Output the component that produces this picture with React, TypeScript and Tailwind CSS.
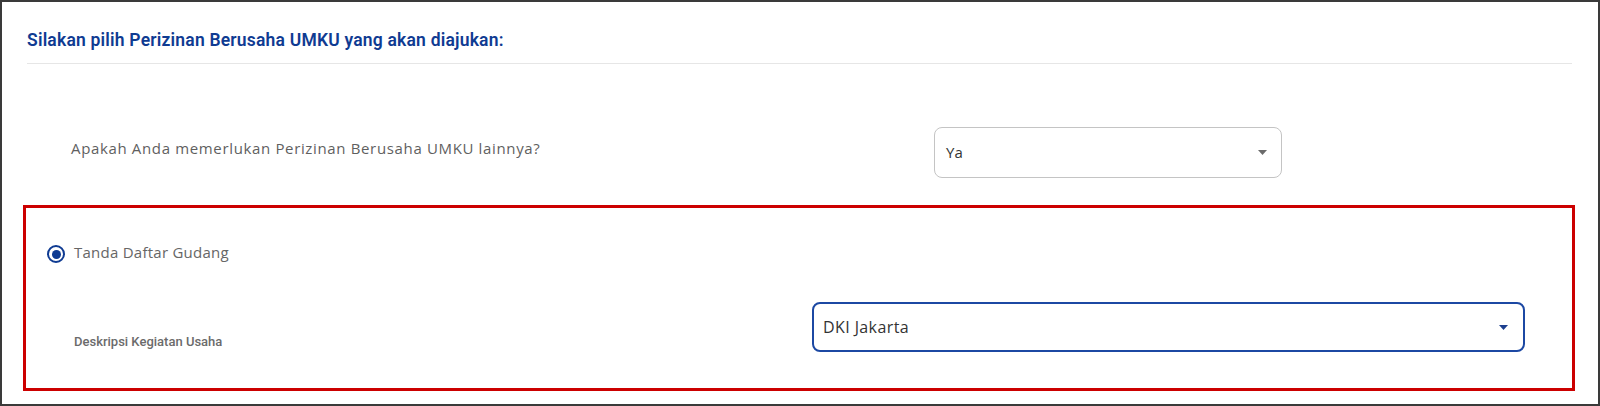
import React from "react";

const body = { fontFamily: '"Open Sans", "DejaVu Sans", sans-serif' };
const roboto = { fontFamily: 'Roboto, "Liberation Sans", sans-serif' };

function Caret({ color }: { color: string }) {
  return (
    <svg width="9" height="5" viewBox="0 0 9 5" className="shrink-0">
      <path d="M0 0 L9 0 L4.5 5 Z" fill={color} />
    </svg>
  );
}

export default function App() {
  return (
    <div className="h-[406px] w-[1600px] border-2 border-[#3a3a3a] bg-white overflow-hidden">
      <div className="pl-[25px] pr-[26px] pt-[28px]">
        <h2
          className="text-[17.5px] leading-[20px] font-semibold text-[#0f3b92] tracking-[0.2px]"
          style={roboto}
        >
          Silakan pilih Perizinan Berusaha UMKU yang akan diajukan:
        </h2>
        <div className="mt-[13px] h-px bg-[#e6e6e6]" />
      </div>

      <div className="mt-[63px] flex items-center">
        <span
          className="pl-[69px] pb-[8px] w-[932px] text-[15px] text-[#5f5f5f] tracking-[0.65px]"
          style={body}
        >
          Apakah Anda memerlukan Perizinan Berusaha UMKU lainnya?
        </span>
        <div className="flex h-[51px] w-[348px] items-center justify-between rounded-lg border border-[#c4c4c4] pl-[11px] pr-[14px]">
          <span className="text-[15px] text-[#333]" style={body}>
            Ya
          </span>
          <Caret color="#6b6b6b" />
        </div>
      </div>

      <div className="ml-[21px] mt-[27px] h-[186px] w-[1552px] border-[3px] border-[#cc0000] pl-[21px]">
        <div className="mt-[37px] flex h-[18px] items-center">
          <div className="flex h-[18px] w-[18px] shrink-0 items-center justify-center rounded-full border-2 border-[#0f3b92]">
            <div className="h-[9px] w-[9px] rounded-full bg-[#0f3b92]" />
          </div>
          <span
            className="ml-[9px] mb-[4px] text-[15px] leading-[20px] text-[#666] tracking-[0.25px]"
            style={body}
          >
            Tanda Daftar Gudang
          </span>
        </div>

        <div className="mt-[39px] flex items-center">
          <span
            className="ml-[27px] w-[738px] pt-[30px] text-[13px] font-medium text-[#6b6b6b]"
            style={roboto}
          >
            Deskripsi Kegiatan Usaha
          </span>
          <div className="flex h-[50px] w-[713px] items-center justify-between rounded-lg border-2 border-[#1c48a3] pl-[9px] pr-[15px]">
            <span className="text-[16px] text-[#333] tracking-[0.4px]" style={body}>
              DKI Jakarta
            </span>
            <Caret color="#1c3f8f" />
          </div>
        </div>
      </div>
    </div>
  );
}
